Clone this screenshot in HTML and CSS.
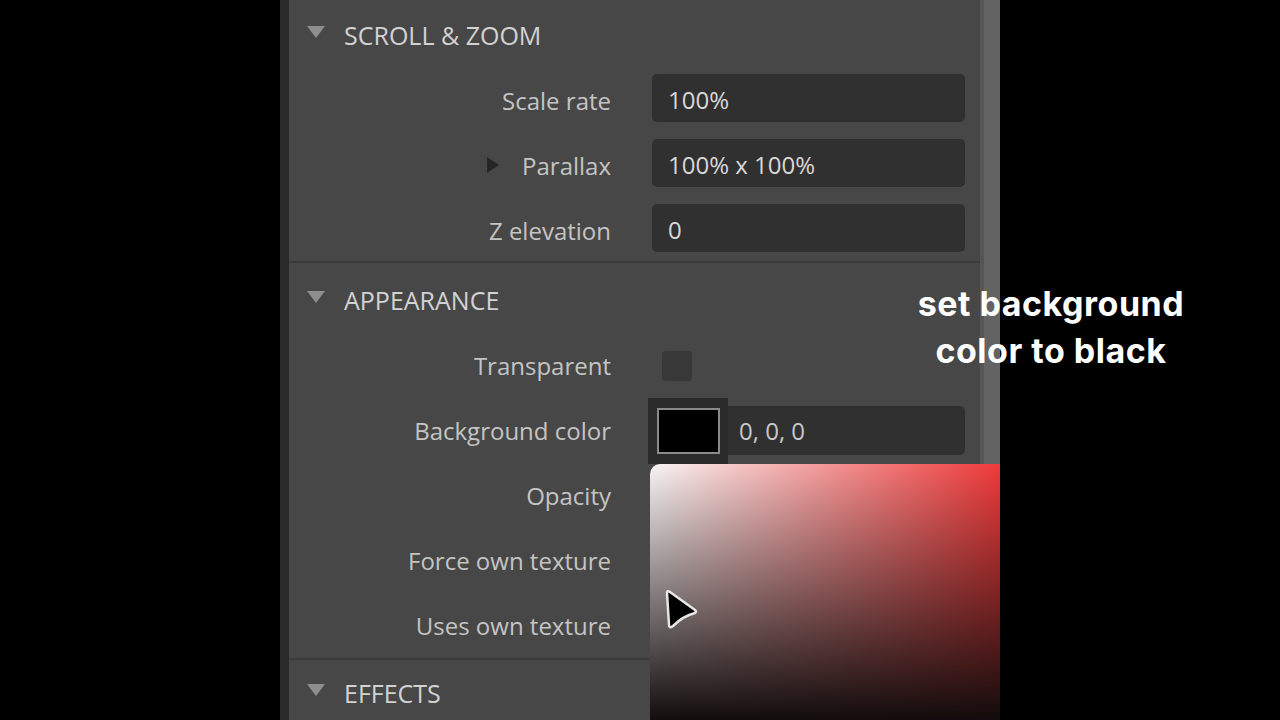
FILE: index.html
```html
<!DOCTYPE html>
<html lang="en">
<head>
    <meta charset="UTF-8">
    <meta name="viewport" content="width=device-width, initial-scale=1.0">
    <title>Layer properties</title>
    <link rel="stylesheet" href="styles.css">
</head>
<body>
    <div class="stage">
        <div class="panel">
            <div class="edge"></div>
            <div class="content">
                <div class="section">
                    <div class="section-head"><span class="arrow-down"></span>SCROLL &amp; ZOOM</div>
                    <div class="row">
                        <div class="label">Scale rate</div>
                        <div class="field">100%</div>
                    </div>
                    <div class="row">
                        <div class="label"><span class="arrow-right"></span>Parallax</div>
                        <div class="field">100% x 100%</div>
                    </div>
                    <div class="row">
                        <div class="label">Z elevation</div>
                        <div class="field">0</div>
                    </div>
                </div>
                <div class="section">
                    <div class="section-head"><span class="arrow-down"></span>APPEARANCE</div>
                    <div class="row">
                        <div class="label">Transparent</div>
                        <div class="value"><span class="checkbox"></span></div>
                    </div>
                    <div class="row">
                        <div class="label">Background color</div>
                        <div class="value color-value">
                            <span class="swatch-box"><span class="swatch"></span></span>
                            <span class="color-text">0, 0, 0</span>
                        </div>
                    </div>
                    <div class="row">
                        <div class="label">Opacity</div>
                        <div class="value"></div>
                    </div>
                    <div class="row">
                        <div class="label">Force own texture</div>
                        <div class="value"></div>
                    </div>
                    <div class="row">
                        <div class="label">Uses own texture</div>
                        <div class="value"></div>
                    </div>
                </div>
                <div class="section">
                    <div class="section-head last"><span class="arrow-down"></span>EFFECTS</div>
                </div>
            </div>
            <div class="scrollbar"></div>

            <div class="picker"></div>
            <svg class="cursor" width="36" height="44" viewBox="0 0 36 44">
                <path d="M3 4 Q3 1 6 3 L31 21 Q33 23 31 24 Q19 27 9 37 Q5 40 5 36 Z" fill="#000" stroke="#e6e6e6" stroke-width="2.5" stroke-linejoin="round"/>
            </svg>
        </div>

        <div class="caption">set background<br>color to black</div>
    </div>
</body>
</html>
```

FILE: styles.css
```css
body {
    margin: 0;
    background-color: #000;
    font-family: "Open Sans", "Noto Sans", sans-serif;
}
.stage {
    position: relative;
    width: 1280px;
    height: 720px;
    overflow: hidden;
    padding-left: 280px;
    box-sizing: border-box;
}
.panel {
    position: relative;
    display: flex;
    width: 720px;
    height: 720px;
    overflow: hidden;
    background-color: #474747;
}
.edge {
    width: 9px;
    background-color: #2a2a2a;
}
.content {
    flex: 1;
}
.scrollbar {
    width: 16px;
    background-color: #636363;
    border-left: 4px solid #555;
}
.section {
    border-bottom: 2px solid #3b3b3b;
}
.section:first-child .section-head {
    height: 62px;
}
.section-head {
    display: flex;
    align-items: center;
    height: 66px;
    padding-top: 4px;
    padding-left: 18px;
    font-size: 25px;
    color: #d2d2d2;
}
.section-head.last {
    padding-top: 0;
}
.arrow-down {
    width: 0;
    height: 0;
    margin-right: 19px;
    margin-top: -6px;
    border-left: 9px solid transparent;
    border-right: 9px solid transparent;
    border-top: 12px solid #8e8e8e;
}
.row {
    display: grid;
    grid-template-columns: 322px 313px;
    column-gap: 41px;
    align-items: center;
    height: 65px;
}
.label {
    display: flex;
    align-items: center;
    justify-content: flex-end;
    font-size: 24px;
    color: #c4c4c4;
}
.section:first-child .label {
    padding-top: 3px;
}
.arrow-right {
    width: 0;
    height: 0;
    margin-right: 23px;
    border-top: 8px solid transparent;
    border-bottom: 8px solid transparent;
    border-left: 12px solid #262626;
}
.field {
    height: 48px;
    margin-top: -2px;
    padding-top: 4px;
    padding-left: 16px;
    box-sizing: border-box;
    line-height: 44px;
    border-radius: 5px;
    background-color: #303030;
    font-size: 24px;
    color: #d8d8d8;
}
.value {
    display: flex;
    align-items: center;
    height: 65px;
}
.checkbox {
    width: 30px;
    height: 30px;
    margin-left: 10px;
    border-radius: 4px;
    background-color: #383838;
}
.color-value {
    margin-left: -4px;
}
.swatch-box {
    display: flex;
    align-items: center;
    justify-content: center;
    width: 80px;
    height: 66px;
    background-color: #2a2a2a;
}
.swatch {
    width: 59px;
    height: 42px;
    border: 2px solid #8a8a8a;
    background-color: #000;
}
.color-text {
    flex: 1;
    height: 49px;
    line-height: 49px;
    padding-left: 11px;
    border-radius: 0 5px 5px 0;
    background-color: #303030;
    font-size: 24px;
    color: #c8c8c8;
}
.picker {
    position: absolute;
    left: 370px;
    top: 464px;
    width: 350px;
    height: 256px;
    border-top-left-radius: 10px;
    background:
        linear-gradient(to bottom, rgba(0, 0, 0, 0), #120c0c),
        linear-gradient(to right, #f8f4f4, #f03a3a);
}
.cursor {
    position: absolute;
    left: 384px;
    top: 589px;
}
.caption {
    position: absolute;
    left: 851px;
    top: 280px;
    width: 400px;
    text-align: center;
    font-family: Inter, "Noto Sans", sans-serif;
    font-weight: 700;
    font-size: 34px;
    line-height: 47px;
    letter-spacing: 0.5px;
    color: #fff;
}
```
